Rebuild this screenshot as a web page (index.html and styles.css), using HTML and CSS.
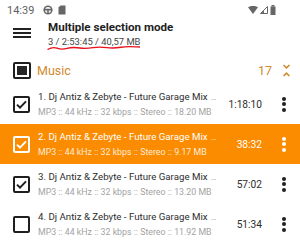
FILE: index.html
```html
<!DOCTYPE html>
<html>
<head>
<meta charset="utf-8">
<link rel="stylesheet" href="styles.css">
</head>
<body>
<div class="status">
  <div class="status-left">
    <span class="time">14:39</span>
    <svg class="sicon" width="10" height="10" viewBox="0 0 10 10"><circle cx="5" cy="5" r="3.8" fill="none" stroke="#666" stroke-width="1.6"/><path d="M1.5 4.6h7M5 4.6v4" stroke="#666" stroke-width="1.6" fill="none"/></svg>
    <svg class="sicon" width="8" height="10" viewBox="0 0 8 10"><path d="M2.5 0.5h5v9h-7v-7z" fill="#666"/></svg>
  </div>
  <div class="status-right">
    <svg width="10" height="8" viewBox="0 0 10 8"><path d="M0 1.2Q5 -1.5 10 1.2L5 8z" fill="#666"/></svg>
    <svg width="8" height="8" viewBox="0 0 8 8"><path d="M7.5 0.5v7h-7z" fill="none" stroke="#666" stroke-width="1"/><path d="M4 4.5v3h-3z" fill="#666"/></svg>
    <svg width="6" height="10" viewBox="0 0 6 10"><rect x="1.5" y="0" width="3" height="1.5" fill="#666"/><rect x="0.5" y="1.5" width="5" height="8.5" fill="#666"/></svg>
  </div>
</div>
<div class="toolbar">
  <div class="hamburger"><span></span><span></span><span></span></div>
  <div class="titles">
    <div class="title">Multiple selection mode</div>
    <div class="subtitle">3 / 2:53:45 / 40,57 MB</div>
    <svg class="scribble" width="94" height="8" viewBox="0 0 94 8"><path d="M0.5 5.5C4 3.5 7 3 10 4.2S16 5.5 20 4.4 28 3.2 33 4 40 4.6 46 3.6 54 2.8 60 3.6 68 4.2 74 3.2 84 2.6 93 3" fill="none" stroke="#e8101a" stroke-width="1.4"/></svg>
  </div>
</div>
<div class="group">
  <span class="cb cb-partial"><span></span></span>
  <span class="group-name">Music</span>
  <span class="group-count">17</span>
  <svg class="unfold" width="11" height="13" viewBox="6.5 3.5 11 17"><path d="M7.41 18.59L8.83 20 12 16.830 15.17 20l1.41-1.41L12 14l-4.59 4.59zm9.18-13.18L15.17 4 12 7.17 8.83 4 7.41 5.410 12 10l4.59-4.59z" fill="currentColor"/></svg>
</div>
<div class="list">
  <div class="row">
    <span class="cb checked"><svg viewBox="0 0 17 17"><path d="M4 8.6l3 3 6-6.2" fill="none" stroke="currentColor" stroke-width="2"/></svg></span>
    <div class="info">
      <div class="t">1. Dj Antiz &amp; Zebyte - Future Garage Mix <span class="ell">…</span></div>
      <div class="s">MP3 :: 44 kHz :: 32 kbps :: Stereo :: 18.20 MB</div>
    </div>
    <span class="dur">1:18:10</span>
    <span class="more"><i></i><i></i><i></i></span>
  </div>
  <div class="row selected">
    <span class="cb checked"><svg viewBox="0 0 17 17"><path d="M4 8.6l3 3 6-6.2" fill="none" stroke="currentColor" stroke-width="2"/></svg></span>
    <div class="info">
      <div class="t">2. Dj Antiz &amp; Zebyte - Future Garage Mix <span class="ell">…</span></div>
      <div class="s">MP3 :: 44 kHz :: 32 kbps :: Stereo :: 9.17 MB</div>
    </div>
    <span class="dur">38:32</span>
    <span class="more"><i></i><i></i><i></i></span>
  </div>
  <div class="row">
    <span class="cb checked"><svg viewBox="0 0 17 17"><path d="M4 8.6l3 3 6-6.2" fill="none" stroke="currentColor" stroke-width="2"/></svg></span>
    <div class="info">
      <div class="t">3. Dj Antiz &amp; Zebyte - Future Garage Mix <span class="ell">…</span></div>
      <div class="s">MP3 :: 44 kHz :: 32 kbps :: Stereo :: 13.20 MB</div>
    </div>
    <span class="dur">57:02</span>
    <span class="more"><i></i><i></i><i></i></span>
  </div>
  <div class="row">
    <span class="cb"></span>
    <div class="info">
      <div class="t">4. Dj Antiz &amp; Zebyte - Future Garage Mix <span class="ell">…</span></div>
      <div class="s">MP3 :: 44 kHz :: 32 kbps :: Stereo :: 11.92 MB</div>
    </div>
    <span class="dur">51:34</span>
    <span class="more"><i></i><i></i><i></i></span>
  </div>
</div>
</body>
</html>
```
FILE: styles.css
```css
* { box-sizing: border-box; }
html, body { margin: 0; padding: 0; background: #fff; }
body { font-family: Roboto, "Liberation Sans", sans-serif; color: #2a2a2a; width: 300px; height: 244px; overflow: hidden; }

.status { height: 19px; display: flex; align-items: center; justify-content: space-between; padding: 1px 24px 0 7px; }
.status-left { display: flex; align-items: center; gap: 5px; }
.time { font-size: 11px; color: #5f5f5f; margin-right: 4px; }
.status-right { display: flex; align-items: center; gap: 2px; }
.sicon { display: block; }

.toolbar { height: 38px; display: flex; align-items: flex-start; }
.hamburger { width: 18px; margin: 9px 17px 0 13px; display: flex; flex-direction: column; gap: 2px; }
.hamburger span { display: block; height: 2px; background: #222; }
.titles { position: relative; padding-top: 1px; }
.title { font-size: 11.6px; font-weight: 700; line-height: 15px; color: #1e1e1e; }
.subtitle { font-size: 9.4px; line-height: 13px; color: #444; }
.scribble { position: absolute; left: -1px; top: 25px; }

.group { height: 27px; display: flex; align-items: center; padding: 0 8px 0 13px; color: #d08a2e; }
.group-name { font-size: 12.5px; margin-left: 6px; flex: 1; }
.group-count { font-size: 12.5px; margin-right: 9px; }
.unfold { display: block; color: #d08a2e; }

.cb { width: 17px; height: 17px; border: 2px solid #1f1f1f; border-radius: 2px; flex: none; display: flex; align-items: center; justify-content: center; color: #1f1f1f; }
.cb svg { width: 17px; height: 17px; display: block; margin: -2px; }
.cb-partial { width: 18px; height: 17px; padding: 2px; }
.cb-partial span { display: block; width: 100%; height: 100%; background: #262626; }

.row { height: 40px; display: flex; align-items: center; padding: 0 0 0 13px; }
.row .cb { margin-right: 8px; }
.info { flex: 1; min-width: 0; padding-top: 1px; }
.t { font-size: 9.7px; line-height: 14px; white-space: nowrap; color: #2e2e2e; }
.ell { color: #999; font-size: 8px; margin-left: 1px; }
.s { font-size: 8.8px; line-height: 13px; margin-top: 1px; white-space: nowrap; overflow: hidden; color: #a2a2a2; }
.dur { font-size: 10.2px; color: #2e2e2e; flex: none; margin-right: 8px; padding-left: 4px; }
.more { width: 28px; margin-right: 2px; flex: none; display: flex; flex-direction: column; align-items: center; gap: 1.5px; }
.more i { width: 4px; height: 4px; border-radius: 50%; background: #1f1f1f; display: block; }

.selected { background: #fb8c00; }
.selected .t, .selected .dur { color: #fff; }
.selected .s, .selected .ell { color: rgba(255,255,255,0.85); }
.selected .cb { border-color: #fff; color: #fff; }
.selected .more i { background: #fff; }
```
